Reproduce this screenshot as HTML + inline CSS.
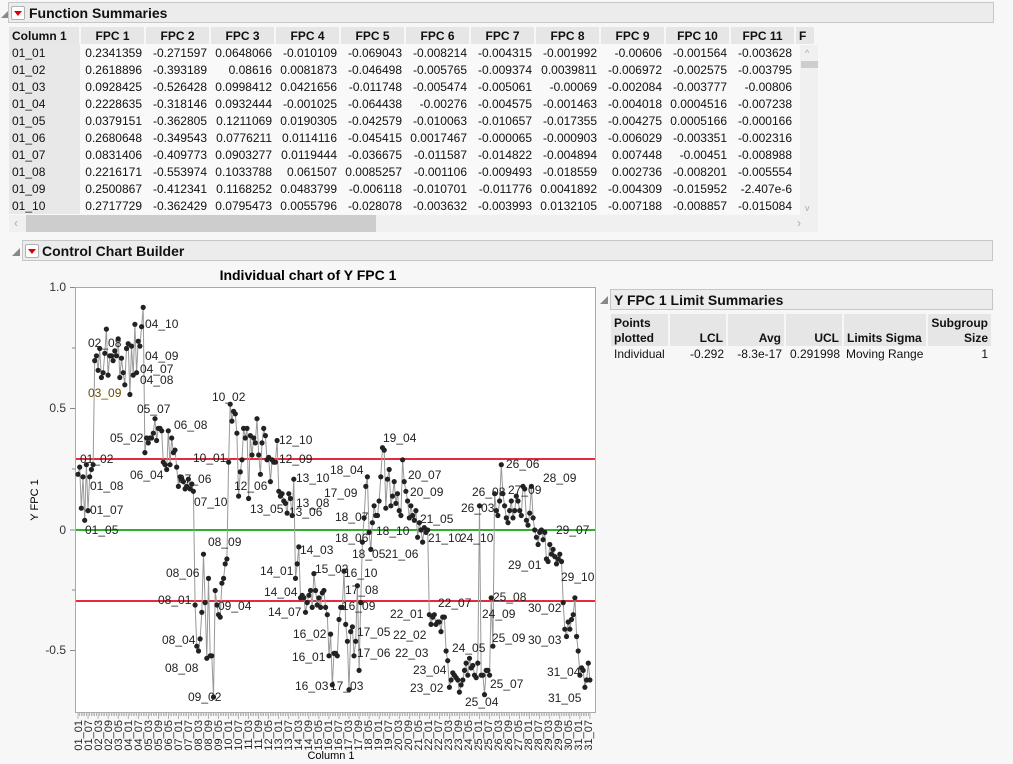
<!DOCTYPE html>
<html><head><meta charset="utf-8"><style>
body{margin:0;width:1013px;height:764px;background:#f7f7f7;font-family:"Liberation Sans",Arial,sans-serif;font-size:12px;color:#111;position:relative;overflow:hidden}
.hdr{position:absolute;background:#ececec;border:1px solid #c6c6c6;font-weight:bold;font-size:14px;height:21px;line-height:21px;box-sizing:border-box}
.hdr .btn{position:absolute;left:2px;top:3px;width:12px;height:12px;border:1px solid #b0b0b0;background:#fff;border-radius:2px}
.hdr .btn:after{content:"";position:absolute;left:2px;top:4px;border-left:4px solid transparent;border-right:4px solid transparent;border-top:5px solid #d00}
.tri{position:absolute;width:0;height:0;border-left:8px solid transparent;border-bottom:8px solid #888}
table{border-collapse:collapse;position:absolute;table-layout:fixed}
td,th{padding:0 3px;height:17px;white-space:nowrap;font-size:12px;overflow:hidden}
th{background:#e6e6e6;font-weight:bold;border-right:2px solid #f7f7f7}
.ft td{text-align:right;background:#f9f9f9}
.ft td:first-child{text-align:left;background:#e8e8e8}
</style></head><body>
<div class="tri" style="left:1px;top:10px"></div>
<div class="hdr" style="left:8px;top:2px;width:986px"><span class="btn"></span><span style="margin-left:20px">Function Summaries</span></div>
<table class="ft" style="left:9px;top:27px;width:806px">
<colgroup><col style="width:71px"><col style="width:65px"><col style="width:65px"><col style="width:65px"><col style="width:65px"><col style="width:65px"><col style="width:65px"><col style="width:65px"><col style="width:65px"><col style="width:65px"><col style="width:65px"><col style="width:65px"><col style="width:20px"></colgroup>
<tr><th style="text-align:left">Column 1</th><th>FPC 1</th><th>FPC 2</th><th>FPC 3</th><th>FPC 4</th><th>FPC 5</th><th>FPC 6</th><th>FPC 7</th><th>FPC 8</th><th>FPC 9</th><th>FPC 10</th><th>FPC 11</th><th style="text-align:left">F</th></tr>
<tr><td>01_01</td><td>0.2341359</td><td>-0.271597</td><td>0.0648066</td><td>-0.010109</td><td>-0.069043</td><td>-0.008214</td><td>-0.004315</td><td>-0.001992</td><td>-0.00606</td><td>-0.001564</td><td>-0.003628</td><td></td></tr>
<tr><td>01_02</td><td>0.2618896</td><td>-0.393189</td><td>0.08616</td><td>0.0081873</td><td>-0.046498</td><td>-0.005765</td><td>-0.009374</td><td>0.0039811</td><td>-0.006972</td><td>-0.002575</td><td>-0.003795</td><td></td></tr>
<tr><td>01_03</td><td>0.0928425</td><td>-0.526428</td><td>0.0998412</td><td>0.0421656</td><td>-0.011748</td><td>-0.005474</td><td>-0.005061</td><td>-0.00069</td><td>-0.002084</td><td>-0.003777</td><td>-0.00806</td><td></td></tr>
<tr><td>01_04</td><td>0.2228635</td><td>-0.318146</td><td>0.0932444</td><td>-0.001025</td><td>-0.064438</td><td>-0.00276</td><td>-0.004575</td><td>-0.001463</td><td>-0.004018</td><td>0.0004516</td><td>-0.007238</td><td></td></tr>
<tr><td>01_05</td><td>0.0379151</td><td>-0.362805</td><td>0.1211069</td><td>0.0190305</td><td>-0.042579</td><td>-0.010063</td><td>-0.010657</td><td>-0.017355</td><td>-0.004275</td><td>0.0005166</td><td>-0.000166</td><td></td></tr>
<tr><td>01_06</td><td>0.2680648</td><td>-0.349543</td><td>0.0776211</td><td>0.0114116</td><td>-0.045415</td><td>0.0017467</td><td>-0.000065</td><td>-0.000903</td><td>-0.006029</td><td>-0.003351</td><td>-0.002316</td><td></td></tr>
<tr><td>01_07</td><td>0.0831406</td><td>-0.409773</td><td>0.0903277</td><td>0.0119444</td><td>-0.036675</td><td>-0.011587</td><td>-0.014822</td><td>-0.004894</td><td>0.007448</td><td>-0.00451</td><td>-0.008988</td><td></td></tr>
<tr><td>01_08</td><td>0.2216171</td><td>-0.553974</td><td>0.1033788</td><td>0.061507</td><td>0.0085257</td><td>-0.001106</td><td>-0.009493</td><td>-0.018559</td><td>0.002736</td><td>-0.008201</td><td>-0.005554</td><td></td></tr>
<tr><td>01_09</td><td>0.2500867</td><td>-0.412341</td><td>0.1168252</td><td>0.0483799</td><td>-0.006118</td><td>-0.010701</td><td>-0.011776</td><td>0.0041892</td><td>-0.004309</td><td>-0.015952</td><td>-2.407e-6</td><td></td></tr>
<tr><td>01_10</td><td>0.2717729</td><td>-0.362429</td><td>0.0795473</td><td>0.0055796</td><td>-0.028078</td><td>-0.003632</td><td>-0.003993</td><td>0.0132105</td><td>-0.007188</td><td>-0.008857</td><td>-0.015084</td><td></td></tr>
</table>
<div style="position:absolute;left:800px;top:45px;width:18px;height:170px;background:#f0f0f0"><div style="position:absolute;top:16px;left:1px;width:17px;height:7px;background:#cdcdcd"></div><div style="position:absolute;top:3px;left:5px;color:#aaa;font-size:9px">^</div><div style="position:absolute;bottom:2px;left:5px;color:#aaa;font-size:9px">v</div></div>
<div style="position:absolute;left:9px;top:215px;width:809px;height:17px;background:#f0f0f0"><div style="position:absolute;left:17px;top:0;width:350px;height:17px;background:#cdcdcd"></div><span style="position:absolute;left:5px;top:1px;color:#aaa">&lsaquo;</span><span style="position:absolute;left:788px;top:1px;color:#aaa">&rsaquo;</span></div>

<div class="tri" style="left:12px;top:248px"></div>
<div class="hdr" style="left:22px;top:240px;width:971px"><span class="btn"></span><span style="margin-left:19px">Control Chart Builder</span></div>

<div class="tri" style="left:600px;top:296px"></div>
<div class="hdr" style="left:610px;top:289px;width:383px;font-size:14px"><span style="margin-left:3px">Y FPC 1 Limit Summaries</span></div>
<table style="left:611px;top:314px;line-height:15px;width:380px">
<colgroup><col style="width:58px"><col style="width:58px"><col style="width:58px"><col style="width:58px"><col style="width:84px"><col style="width:64px"></colgroup>
<tr><th style="text-align:left;vertical-align:bottom;height:32px">Points<br>plotted</th><th style="text-align:right;vertical-align:bottom">LCL</th><th style="text-align:right;vertical-align:bottom">Avg</th><th style="text-align:right;vertical-align:bottom">UCL</th><th style="text-align:left;vertical-align:bottom">Limits Sigma</th><th style="text-align:right;vertical-align:bottom;border-right:0">Subgroup<br>Size</th></tr>
<tr><td>Individual</td><td style="text-align:right">-0.292</td><td style="text-align:right">-8.3e-17</td><td style="text-align:right">0.291998</td><td>Moving Range</td><td style="text-align:right">1</td></tr>
</table>

<svg id="ch" style="position:absolute;left:0;top:260px" width="600" height="504" font-family="Liberation Sans, Arial, sans-serif" font-size="12">
<text x="308" y="20" text-anchor="middle" font-weight="bold" font-size="14">Individual chart of Y FPC 1</text>
<rect x="75.5" y="27.5" width="520" height="425" fill="#fff" stroke="#aaa"/>
<g fill="#333" text-anchor="end" font-size="12"><text x="66" y="31">1.0</text><text x="66" y="152">0.5</text><text x="66" y="274">0</text><text x="66" y="394">-0.5</text></g>
<g stroke="#888"><line x1="70" x2="75" y1="27.5" y2="27.5"/><line x1="70" x2="75" y1="148.5" y2="148.5"/><line x1="70" x2="75" y1="270" y2="270"/><line x1="70" x2="75" y1="390.5" y2="390.5"/><line x1="72" x2="75" y1="88" y2="88"/><line x1="72" x2="75" y1="209" y2="209"/><line x1="72" x2="75" y1="330" y2="330"/></g>
<text transform="translate(38 240) rotate(-90)" text-anchor="middle" font-size="11">Y FPC 1</text>
<line x1="76" x2="595" y1="199" y2="199" stroke="#e8283c" stroke-width="2"/>
<line x1="76" x2="595" y1="341" y2="341" stroke="#e8283c" stroke-width="2"/>
<line x1="76" x2="595" y1="270" y2="270" stroke="#2db12d" stroke-width="2"/>
<g id="data"></g>
<g font-size="12" fill="#222">
<text x="145" y="68">04_10</text><text x="88" y="87">02_08</text><text x="145" y="70" dy="30">04_09</text><text x="140" y="109" dy="4">04_07</text><text x="140" y="124">04_08</text>
<text x="88" y="137" fill="#6b4a00">03_09</text><text x="137" y="153">05_07</text><text x="110" y="182">05_02</text><text x="174" y="169">06_08</text><text x="80" y="203">01_02</text>
<text x="130" y="219">06_04</text><text x="178" y="223">07_06</text><text x="194" y="246">07_10</text><text x="90" y="230">01_08</text><text x="90" y="254">01_07</text><text x="85" y="274">01_05</text>
<text x="212" y="141">10_02</text><text x="193" y="202">10_01</text><text x="234" y="230">12_06</text><text x="279" y="184">12_10</text><text x="279" y="203">12_09</text><text x="296" y="222">13_10</text><text x="296" y="247">13_08</text><text x="250" y="253">13_05</text><text x="289" y="256">13_06</text>
<text x="330" y="214">18_04</text><text x="324" y="237">17_09</text><text x="335" y="261">18_07</text><text x="335" y="282">18_06</text><text x="352" y="298">18_05</text><text x="385" y="298">21_06</text><text x="376" y="275">18_10</text><text x="383" y="182">19_04</text>
<text x="408" y="219">20_07</text><text x="410" y="236">20_09</text><text x="420" y="263">21_05</text><text x="428" y="282">21_10</text><text x="460" y="282">24_10</text>
<text x="472" y="236">26_08</text><text x="461" y="252">26_03</text><text x="506" y="208">26_06</text><text x="508" y="234">27_09</text><text x="543" y="222">28_09</text><text x="556" y="274">29_07</text><text x="508" y="309">29_01</text><text x="561" y="321">29_10</text>
<text x="208" y="286">08_09</text><text x="166" y="317">08_06</text><text x="158" y="344">08_01</text><text x="218" y="350">09_04</text><text x="162" y="384">08_04</text><text x="165" y="412">08_08</text><text x="188" y="441">09_02</text>
<text x="300" y="294">14_03</text><text x="260" y="315">14_01</text><text x="264" y="336">14_04</text><text x="268" y="356">14_07</text><text x="315" y="313">15_02</text><text x="344" y="317">16_10</text><text x="345" y="334">17_08</text><text x="342" y="350">16_09</text>
<text x="357" y="376">17_05</text><text x="293" y="378">16_02</text><text x="357" y="397">17_06</text><text x="292" y="401">16_01</text><text x="295" y="430">16_03</text><text x="330" y="430">17_03</text>
<text x="438" y="347">22_07</text><text x="390" y="358">22_01</text><text x="482" y="358">24_09</text><text x="493" y="341">25_08</text><text x="393" y="379">22_02</text><text x="492" y="382">25_09</text><text x="395" y="397">22_03</text><text x="452" y="392">24_05</text>
<text x="413" y="414">23_04</text><text x="410" y="432">23_02</text><text x="490" y="428">25_07</text><text x="465" y="446">25_04</text>
<text x="528" y="352">30_02</text><text x="528" y="384">30_03</text><text x="547" y="416">31_04</text><text x="548" y="442">31_05</text>
</g>
<g id="xt" font-size="11" fill="#222"></g>
<text x="331" y="499" text-anchor="middle" font-size="11">Column 1</text>
</svg>
<script>
var d=[[.23,.26,.09,.22,.04,.27,.08,.22,.25,.27],[.7,.72,.66,.75,.63,.65,.73,.83,.64,.72],[.72,.7,.74,.72,.79,.63,.71,.65,.6,.75],[.77,.56,.76,.64,.85,.65,.78,.76,.84,.92],[.32,.38,.36,.38,.38,.4,.46,.37,.42,.42],[.41,.28,.27,.25,.41,.27,.38,.32,.33,.26],[.18,.22,.21,.2,.17,.18,.21,.17,.19,.16],[-.31,-.48,-.5,-.45,-.34,-.1,-.3,-.53,-.2,-.52],[-.52,-.69,-.25,-.31,-.35,-.36,-.22,-.2,-.14,-.12],[.28,.52,.45,.49,.48,.4,.14,.24,.29,.42],[.38,.42,.13,.39,.31,.38,.36,.46,.31,.23],[.36,.42,.39,.29,.3,.2,.29,.28,.28,.37],[.16,.14,.15,.12,.11,.07,.15,.13,.06,.21],[-.2,-.14,-.07,-.28,-.27,-.28,-.34,-.3,-.27,-.25],[-.32,-.18,-.25,-.31,-.28,-.32,-.26,-.25,-.32,-.35],[-.52,-.43,-.64,-.51,-.51,-.52,-.37,-.32,-.32,-.17],[-.39,-.46,-.66,-.42,-.4,-.52,-.46,-.23,-.58,-.3],[-.05,.05,.18,.22,-.01,-.08,.03,.1,.06,.06],[.12,.22,.34,.33,.09,.21,.25,.1,.14,.2],[.11,.15,.08,.06,.29,.2,.16,.12,.05,.1],[.06,.04,.08,-.03,.03,0,-.05,.01,-.01,0],[-.35,-.39,-.36,-.35,-.39,-.38,-.38,-.42,-.36,-.36],[-.5,-.54,-.65,-.62,-.59,-.6,-.61,-.62,-.67,-.64],[-.62,-.58,-.55,-.6,-.53,-.57,-.56,-.6,-.61,-.55],[.1,-.6,-.6,-.68,-.58,-.58,-.6,-.28,-.48,.15],[.08,.06,.12,.27,.15,.1,.05,.03,.08,.12],[.05,.08,.14,.12,.08,.06,.18,.17,.04,.02],[.07,.18,.05,0,-.03,-.06,-.01,0,-.04,-.01],[-.12,-.13,-.06,-.1,-.08,-.11,-.14,-.12,-.1,-.13],[-.3,-.41,-.44,-.38,-.41,-.37,-.35,-.28,-.44,-.5],[-.6,-.57,-.58,-.65,-.62,-.55,-.62]];
var pts=[],i=0,s="";d.forEach(function(r){r.forEach(function(v){pts.push([78+i*1.673,270-v*242]);i++})});
s='<polyline fill="none" stroke="#999" stroke-width="1" points="'+pts.map(function(p){return p[0].toFixed(1)+","+p[1].toFixed(1)}).join(" ")+'"/>';
pts.forEach(function(p){s+='<circle cx="'+p[0].toFixed(1)+'" cy="'+p[1].toFixed(1)+'" r="2.6" fill="#222"/>'});
document.getElementById("data").innerHTML=s;
var t="";for(var k=0;k<=306;k+=1){var x=78+k*1.673;t+='<line x1="'+x+'" x2="'+x+'" y1="453" y2="'+(k%6==0?459:456)+'" stroke="#888" stroke-width=".6"/>';}
document.getElementById("xt").insertAdjacentHTML("beforeend",t);
</script>
<svg style="position:absolute;left:0;top:260px" width="600" height="504" font-family="Liberation Sans, Arial, sans-serif" font-size="11" fill="#222">
<g text-anchor="end">
<text transform="translate(82 460) rotate(-90)">01_01</text><text transform="translate(92 460) rotate(-90)">01_07</text><text transform="translate(102 460) rotate(-90)">02_03</text><text transform="translate(112 460) rotate(-90)">02_09</text><text transform="translate(122 460) rotate(-90)">03_05</text><text transform="translate(132 460) rotate(-90)">04_01</text><text transform="translate(142 460) rotate(-90)">04_07</text><text transform="translate(152 460) rotate(-90)">05_03</text><text transform="translate(162 460) rotate(-90)">05_09</text><text transform="translate(172 460) rotate(-90)">06_05</text><text transform="translate(182 460) rotate(-90)">07_01</text><text transform="translate(192 460) rotate(-90)">07_07</text><text transform="translate(202 460) rotate(-90)">08_03</text><text transform="translate(212 460) rotate(-90)">08_09</text><text transform="translate(222 460) rotate(-90)">09_05</text><text transform="translate(232 460) rotate(-90)">10_01</text><text transform="translate(242 460) rotate(-90)">10_07</text><text transform="translate(252 460) rotate(-90)">11_03</text><text transform="translate(262 460) rotate(-90)">11_09</text><text transform="translate(272 460) rotate(-90)">12_05</text><text transform="translate(282 460) rotate(-90)">13_01</text><text transform="translate(292 460) rotate(-90)">13_07</text><text transform="translate(302 460) rotate(-90)">14_03</text><text transform="translate(312 460) rotate(-90)">14_09</text><text transform="translate(322 460) rotate(-90)">15_05</text><text transform="translate(332 460) rotate(-90)">16_01</text><text transform="translate(342 460) rotate(-90)">16_07</text><text transform="translate(352 460) rotate(-90)">17_03</text><text transform="translate(362 460) rotate(-90)">17_09</text><text transform="translate(372 460) rotate(-90)">18_05</text><text transform="translate(382 460) rotate(-90)">19_01</text><text transform="translate(392 460) rotate(-90)">19_07</text><text transform="translate(402 460) rotate(-90)">20_03</text><text transform="translate(412 460) rotate(-90)">20_09</text><text transform="translate(422 460) rotate(-90)">21_05</text><text transform="translate(432 460) rotate(-90)">22_01</text><text transform="translate(442 460) rotate(-90)">22_07</text><text transform="translate(452 460) rotate(-90)">23_03</text><text transform="translate(462 460) rotate(-90)">23_09</text><text transform="translate(472 460) rotate(-90)">24_05</text><text transform="translate(482 460) rotate(-90)">25_01</text><text transform="translate(492 460) rotate(-90)">25_07</text><text transform="translate(502 460) rotate(-90)">26_03</text><text transform="translate(512 460) rotate(-90)">26_09</text><text transform="translate(522 460) rotate(-90)">27_05</text><text transform="translate(532 460) rotate(-90)">28_01</text><text transform="translate(542 460) rotate(-90)">28_07</text><text transform="translate(552 460) rotate(-90)">29_03</text><text transform="translate(562 460) rotate(-90)">29_09</text><text transform="translate(572 460) rotate(-90)">30_05</text><text transform="translate(582 460) rotate(-90)">31_01</text><text transform="translate(592 460) rotate(-90)">31_07</text>
</g></svg>
</body></html>
